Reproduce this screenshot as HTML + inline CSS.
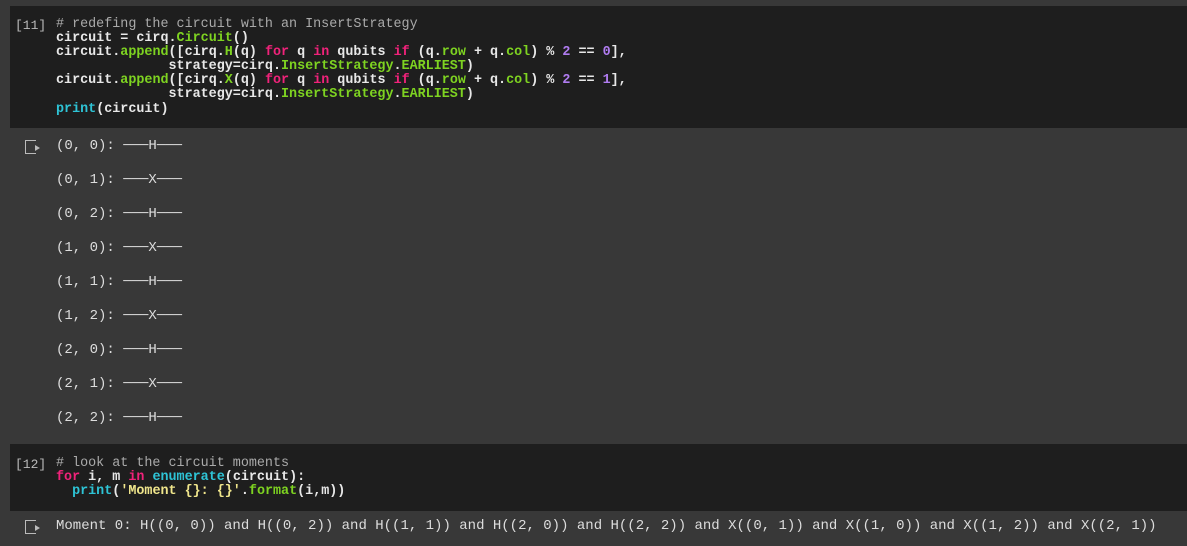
<!DOCTYPE html>
<html><head><style>
body{margin:0;width:1187px;height:546px;background:#383838;overflow:hidden;font-family:"Liberation Mono","DejaVu Sans Mono",monospace;position:relative}
.cell{position:absolute;left:10px;right:0;background:#1e1e1e}
.code{position:absolute;left:56px;font-size:13.4px;line-height:14.1px;color:#e8e8e8;white-space:pre;font-weight:bold}
.num{position:absolute;left:15px;font-size:13px;color:#bbb;white-space:pre}
.c{color:#aaa;font-weight:normal}.g{color:#7ed321}.k{color:#f0227a}.p{color:#b07cf0}.b{color:#2ec4d6}.y{color:#f0e68c}
.out{position:absolute;left:56px;font-size:14px;color:#ddd;white-space:pre;line-height:17px}
.ico{position:absolute;left:25px;width:11px;height:14px;border:1.5px solid #bbb;border-right:none;box-sizing:border-box}
.ico:after{content:"";position:absolute;left:9px;top:4px;border-left:5px solid #bbb;border-top:3px solid transparent;border-bottom:3px solid transparent}
</style></head><body>
<div class="cell" style="top:6px;height:122px"></div>
<div class="num" style="top:18px">[11]</div>
<div class="code" style="top:18px"><span class="c"># redefing the circuit with an InsertStrategy</span>
circuit = cirq.<span class="g">Circuit</span>()
circuit.<span class="g">append</span>([cirq.<span class="g">H</span>(q) <span class="k">for</span> q <span class="k">in</span> qubits <span class="k">if</span> (q.<span class="g">row</span> + q.<span class="g">col</span>) % <span class="p">2</span> == <span class="p">0</span>],
              strategy=cirq.<span class="g">InsertStrategy</span>.<span class="g">EARLIEST</span>)
circuit.<span class="g">append</span>([cirq.<span class="g">X</span>(q) <span class="k">for</span> q <span class="k">in</span> qubits <span class="k">if</span> (q.<span class="g">row</span> + q.<span class="g">col</span>) % <span class="p">2</span> == <span class="p">1</span>],
              strategy=cirq.<span class="g">InsertStrategy</span>.<span class="g">EARLIEST</span>)
<span class="b">print</span>(circuit)</div>
<div class="ico" style="top:140px"></div>
<div class="out" style="top:138px">(0, 0): ───H───

(0, 1): ───X───

(0, 2): ───H───

(1, 0): ───X───

(1, 1): ───H───

(1, 2): ───X───

(2, 0): ───H───

(2, 1): ───X───

(2, 2): ───H───</div>
<div class="cell" style="top:444px;height:67px"></div>
<div class="num" style="top:457px">[12]</div>
<div class="code" style="top:457px"><span class="c"># look at the circuit moments</span>
<span class="k">for</span> i, m <span class="k">in</span> <span class="b">enumerate</span>(circuit):
  <span class="b">print</span>(<span class="y">'Moment {}: {}'</span>.<span class="g">format</span>(i,m))</div>
<div class="ico" style="top:520px"></div>
<div class="out" style="top:518px">Moment 0: H((0, 0)) and H((0, 2)) and H((1, 1)) and H((2, 0)) and H((2, 2)) and X((0, 1)) and X((1, 0)) and X((1, 2)) and X((2, 1))</div>
</body></html>
